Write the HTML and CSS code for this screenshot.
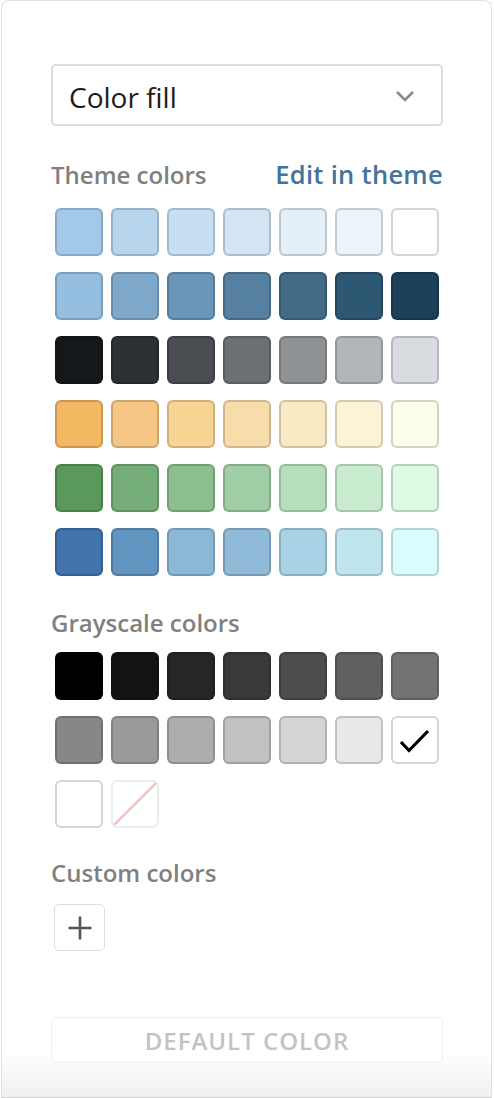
FILE: index.html
```html
<!DOCTYPE html>
<html lang="en">
<head>
<meta charset="utf-8">
<title>Color fill</title>
<link rel="stylesheet" href="styles.css">
</head>
<body>
<div class="panel">
  <div class="select">
    <span class="select-label">Color fill</span>
    <svg class="caret" width="20" height="12" viewBox="0 0 20 12"><path d="M2 2 L10 10 L18 2" fill="none" stroke="#8a8a8a" stroke-width="2.6"/></svg>
  </div>

  <div class="heading heading-theme">
    <span class="heading-text">Theme colors</span>
    <span class="link">Edit in theme</span>
  </div>
  <div class="grid grid-theme">
    <div class="sw" style="background:#a3c9ea"></div>
    <div class="sw" style="background:#b8d5ee"></div>
    <div class="sw" style="background:#c6dff3"></div>
    <div class="sw" style="background:#d3e4f4"></div>
    <div class="sw" style="background:#e3eff9"></div>
    <div class="sw" style="background:#eef5fa"></div>
    <div class="sw" style="background:#ffffff"></div>

    <div class="sw" style="background:#94bfe1"></div>
    <div class="sw" style="background:#7fa9cb"></div>
    <div class="sw" style="background:#6996b8"></div>
    <div class="sw" style="background:#55809f"></div>
    <div class="sw" style="background:#416b87"></div>
    <div class="sw" style="background:#2c5874"></div>
    <div class="sw" style="background:#1b4059"></div>

    <div class="sw" style="background:#15181b"></div>
    <div class="sw" style="background:#2c3135"></div>
    <div class="sw" style="background:#4a4e52"></div>
    <div class="sw" style="background:#6c7073"></div>
    <div class="sw" style="background:#8f9295"></div>
    <div class="sw" style="background:#b2b6b9"></div>
    <div class="sw" style="background:#d8dce0"></div>

    <div class="sw" style="background:#f4b762"></div>
    <div class="sw" style="background:#f6c784"></div>
    <div class="sw" style="background:#f7d394"></div>
    <div class="sw" style="background:#f8ddab"></div>
    <div class="sw" style="background:#fae9c3"></div>
    <div class="sw" style="background:#fdf3d7"></div>
    <div class="sw" style="background:#fefeec"></div>

    <div class="sw" style="background:#5a995a"></div>
    <div class="sw" style="background:#76ae79"></div>
    <div class="sw" style="background:#8bbf8e"></div>
    <div class="sw" style="background:#a0cfa5"></div>
    <div class="sw" style="background:#b5dfba"></div>
    <div class="sw" style="background:#c9ecd0"></div>
    <div class="sw" style="background:#dcfae4"></div>

    <div class="sw" style="background:#4173ac"></div>
    <div class="sw" style="background:#6194c0"></div>
    <div class="sw" style="background:#8cb8d8"></div>
    <div class="sw" style="background:#8fbad8"></div>
    <div class="sw" style="background:#a8d2e5"></div>
    <div class="sw" style="background:#bfe5ee"></div>
    <div class="sw" style="background:#d9fdff"></div>
  </div>

  <div class="heading heading-gray">
    <span class="heading-text">Grayscale colors</span>
  </div>
  <div class="grid grid-gray">
    <div class="sw" style="background:#000000"></div>
    <div class="sw" style="background:#131313"></div>
    <div class="sw" style="background:#262626"></div>
    <div class="sw" style="background:#393939"></div>
    <div class="sw" style="background:#4c4c4c"></div>
    <div class="sw" style="background:#606060"></div>
    <div class="sw" style="background:#737373"></div>

    <div class="sw" style="background:#878787"></div>
    <div class="sw" style="background:#9a9a9a"></div>
    <div class="sw" style="background:#adadad"></div>
    <div class="sw" style="background:#c1c1c1"></div>
    <div class="sw" style="background:#d5d5d5"></div>
    <div class="sw" style="background:#e8e8e8"></div>
    <div class="sw sw-selected" style="background:#ffffff">
      <svg class="check" width="44" height="44" viewBox="0 0 44 44"><path d="M8 24 L16 32.5 L35 13" fill="none" stroke="#000" stroke-width="3.2"/></svg>
    </div>

    <div class="sw" style="background:#ffffff"></div>
    <div class="sw sw-none">
      <svg class="none-line" width="46" height="46" viewBox="0 0 46 46"><path d="M0 46 L46 0" stroke="#f0c0c0" stroke-width="2.4"/></svg>
    </div>
  </div>

  <div class="heading heading-custom">
    <span class="heading-text">Custom colors</span>
  </div>
  <div class="custom-row">
    <div class="add-btn">
      <svg width="26" height="26" viewBox="0 0 26 26"><path d="M13 1.5 V24.5 M1.5 13 H24.5" stroke="#555" stroke-width="2.6"/></svg>
    </div>
  </div>

  <div class="default-btn">DEFAULT COLOR</div>
</div>
</body>
</html>
```

FILE: styles.css
```css
* { box-sizing: border-box; }

html, body {
  margin: 0;
  padding: 0;
  background: #ffffff;
}

body {
  font-family: "Open Sans", "Noto Sans", sans-serif;
  width: 494px;
  height: 1098px;
  overflow: hidden;
}

.panel {
  margin-left: 1px;
  width: 491px;
  height: 1098px;
  border: 1px solid #e2e2e2;
  border-bottom-color: #d4d4d4;
  border-radius: 8px 8px 0 0;
  padding: 63px 48px 0 49px;
  background: linear-gradient(to bottom, #ffffff 0, #ffffff 1050px, #f0f0f0 100%);
}

.select {
  height: 62px;
  border: 2px solid #dcdcdc;
  border-radius: 5px;
  display: flex;
  align-items: center;
  justify-content: space-between;
  padding: 3px 26px 0 16px;
  background: #fff;
}

.select-label {
  font-size: 28px;
  color: #1c1c1c;
  line-height: 32px;
}

.caret {
  display: block;
  margin-top: -2px;
}

.heading {
  display: flex;
  align-items: baseline;
  justify-content: space-between;
  line-height: 32px;
  height: 32px;
}

.heading-text {
  font-size: 24px;
  font-weight: 600;
  color: #808080;
}

.link {
  font-size: 25.5px;
  font-weight: 600;
  color: #44739c;
  letter-spacing: 0.3px;
}

.heading-theme { margin-top: 32px; }
.heading-gray { margin-top: 31px; }
.heading-custom { margin-top: 29px; }

.grid {
  display: grid;
  grid-template-columns: repeat(7, 1fr);
  row-gap: 16px;
  justify-items: center;
}

.grid-theme { margin-top: 18px; }
.grid-gray { margin-top: 13px; }

.sw {
  width: 48px;
  height: 48px;
  border: 2px solid rgba(0, 0, 0, 0.17);
  border-radius: 6px;
  position: relative;
}

.sw-selected {
  display: flex;
  align-items: center;
  justify-content: center;
}

.check { display: block; }

.sw-none {
  background: #ffffff;
  border-color: #ececec;
  overflow: hidden;
}

.none-line {
  position: absolute;
  left: -1px;
  top: -1px;
}

.custom-row {
  margin-top: 15px;
  padding-left: 3px;
  display: flex;
}

.add-btn {
  width: 51px;
  height: 47px;
  border: 1.5px solid #dddddd;
  border-radius: 5px;
  display: flex;
  align-items: center;
  justify-content: center;
  background: #fff;
}

.add-btn svg { display: block; }

.default-btn {
  margin-top: 66px;
  height: 46px;
  border: 1px solid #eeeeee;
  border-radius: 5px;
  display: flex;
  align-items: center;
  justify-content: center;
  font-size: 24px;
  font-weight: 600;
  letter-spacing: 1px;
  color: #c3c3c3;
  background: #fff;
}
```
